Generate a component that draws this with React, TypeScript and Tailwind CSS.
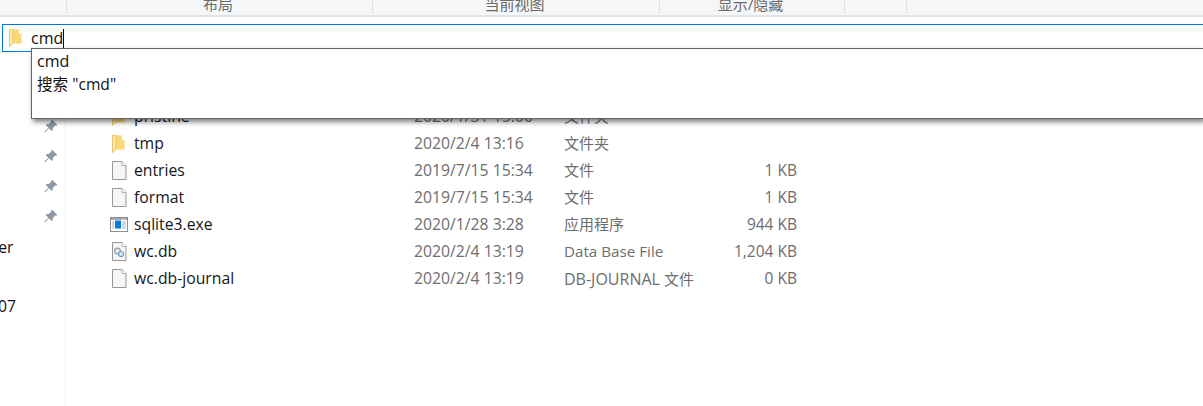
function Folder() {
  return (
    <svg width="13" height="18" viewBox="0 0 13 18">
      <path d="M3.500 0.500H10V5H12.500V14.500H3.500z" fill="#f7d36c" />
      <path d="M10 1H4V14H12V6H10z" fill="#fad873" />
      <path d="M0 0.500H4V14L1 17.500H0z" fill="#fdeaac" />
      <path d="M0.500 0.500V17.500M0.500 0.500H4M4 0.500V14L1 17.500" fill="none" stroke="#ecc76a" strokeWidth="1" />
    </svg>
  );
}

function FileIcon() {
  return (
    <svg width="16" height="19" viewBox="0 0 16 19">
      <path d="M1.500 .5h9.500l4 4v14H1.500z" fill="#f5f6f7" stroke="#979797" />
      <path d="M11 .5v4h4" fill="#fff" stroke="#b0b0b0" />
    </svg>
  );
}

function DbIcon() {
  return (
    <svg width="16" height="19" viewBox="0 0 16 19">
      <path d="M1.500 .5h9.500l4 4v14H1.500z" fill="#f5f6f7" stroke="#979797" />
      <path d="M11 .5v4h4" fill="#fff" stroke="#b0b0b0" />
      <circle cx="6.500" cy="9" r="2.800" fill="none" stroke="#9aa3a8" strokeWidth="1.500" />
      <circle cx="10" cy="12" r="2.500" fill="#dbe8f3" stroke="#6f9cc4" strokeWidth="1.200" />
    </svg>
  );
}

function ExeIcon() {
  return (
    <svg width="18" height="15" viewBox="0 0 18 15">
      <rect x="0.500" y="0.500" width="17" height="14" fill="#fff" stroke="#8d8d8d" />
      <path d="M1 1h16v2H1z" fill="#a8a8a8" />
      <path d="M12 2h1M14 2h1" stroke="#e8e8e8" />
      <rect x="5" y="3.500" width="6" height="8" fill="#0b78d6" />
      <path d="M2 5h2M2 7h2M2 9h2M2 11h2M12 5h4M12 7h4M12 9h4M12 11h4" stroke="#9db6cc" strokeWidth="1" />
    </svg>
  );
}

function PinIcon() {
  return (
    <svg width="14" height="14" viewBox="0 0 14 14">
      <path d="M8.200.8l5 5-1 .9-.9-.3-2.600 2.600.1 2.100-1 1L5 9.300 1.200 13.200.6 13l-.1-.4L4.400 8.700 1.700 6l1-1 2.100.1 2.600-2.600-.2-.9z" fill="#8d98a2" />
    </svg>
  );
}

const rows = [
  { name: "pristine", date: "2020/1/31 15:06", type: <span className="text-[15px]">文件夹</span>, size: "", icon: <Folder /> },
  { name: "tmp", date: "2020/2/4 13:16", type: <span className="text-[15px]">文件夹</span>, size: "", icon: <Folder /> },
  { name: "entries", date: "2019/7/15 15:34", type: <span className="text-[15px]">文件</span>, size: "1 KB", icon: <FileIcon /> },
  { name: "format", date: "2019/7/15 15:34", type: <span className="text-[15px]">文件</span>, size: "1 KB", icon: <FileIcon /> },
  { name: "sqlite3.exe", date: "2020/1/28 3:28", type: <span className="text-[15px]">应用程序</span>, size: "944 KB", icon: <ExeIcon /> },
  { name: "wc.db", date: "2020/2/4 13:19", type: <span className="text-[15.200px]">Data Base File</span>, size: "1,204 KB", icon: <DbIcon /> },
  {
    name: "wc.db-journal",
    date: "2020/2/4 13:19",
    type: (
      <span className="text-[16px]">
        DB-JOURNAL <span className="text-[15px]">文件</span>
      </span>
    ),
    size: "0 KB",
    icon: <FileIcon />,
  },
];

const ribbon = [
  { w: "w-[67px]", label: "" },
  { w: "w-[306px]", label: "布局" },
  { w: "w-[287px]", label: "当前视图" },
  { w: "w-[185px]", label: "显示/隐藏" },
  { w: "w-[62px]", label: "" },
];

export default function App() {
  return (
    <div className="w-[1203px] h-[406px] overflow-hidden bg-white flex flex-col font-['Open_Sans','Noto_Sans_CJK_SC',sans-serif] text-[15.750px]">
      <div className="h-[17px] shrink-0 bg-[#f5f6f7] border-b-2 border-[#e3e4e5] flex items-start">
        {ribbon.map((r, i) => (
          <div
            key={i}
            className={`${r.w} h-[13px] border-r border-[#dfe0e2] flex items-end justify-center pr-[3px] text-[#6a6a6a] text-[15px] leading-[20px]`}
          >
            {r.label && <span className="-mb-[1px] whitespace-nowrap">{r.label}</span>}
          </div>
        ))}
      </div>

      <div className="relative shrink-0 mt-[7px] ml-[2px] h-[28px] border border-r-0 border-[#0078d7] bg-white flex items-center pl-[6px]">
        <Folder />
        <span className="ml-[9px] text-[16px] leading-[20px] text-[#111]">cmd</span>
        <span className="w-px h-[19px] bg-black" />
        <div className="absolute left-[28px] top-[23px] right-0 h-[71px] bg-white border border-r-0 border-[#646464] shadow-[2px_3px_5px_rgba(0,0,0,0.5)] z-10 pl-[5px] text-[#111] text-[16px] leading-[24px]">
          <div>cmd</div>
          <div className="-mt-[1px] text-[15.600px]">搜索 "cmd"</div>
        </div>
      </div>

      <div className="flex flex-1 min-h-0">
        <div className="w-[66px] shrink-0 border-r border-[#f1f1f1] text-[#111]">
          <div className="flex flex-col items-end pr-[7px] pt-[67px] gap-[16px]">
            <PinIcon />
            <PinIcon />
            <PinIcon />
            <PinIcon />
          </div>
          <div className="mt-[14px] leading-[20px] whitespace-nowrap">
            <div className="-ml-[33px]">Folder</div>
            <div className="mt-[39px] -ml-[20px]">2007</div>
          </div>
        </div>

        <div className="pt-[51px] pl-[43px]">
          {rows.map((r) => (
            <div key={r.name} className="h-[27px] grid grid-cols-[25px_280px_150px_233px] items-center w-[688px]">
              <div className="flex items-center justify-center w-[19px] h-[27px]">{r.icon}</div>
              <div className="text-[#14161a] whitespace-nowrap">{r.name}</div>
              <div className="text-[#6d6d6d] whitespace-nowrap">{r.date}</div>
              <div className="text-[#6d6d6d] whitespace-nowrap flex justify-between">
                {r.type}
                <span className="text-[15.500px]">{r.size}</span>
              </div>
            </div>
          ))}
        </div>
      </div>
    </div>
  );
}
